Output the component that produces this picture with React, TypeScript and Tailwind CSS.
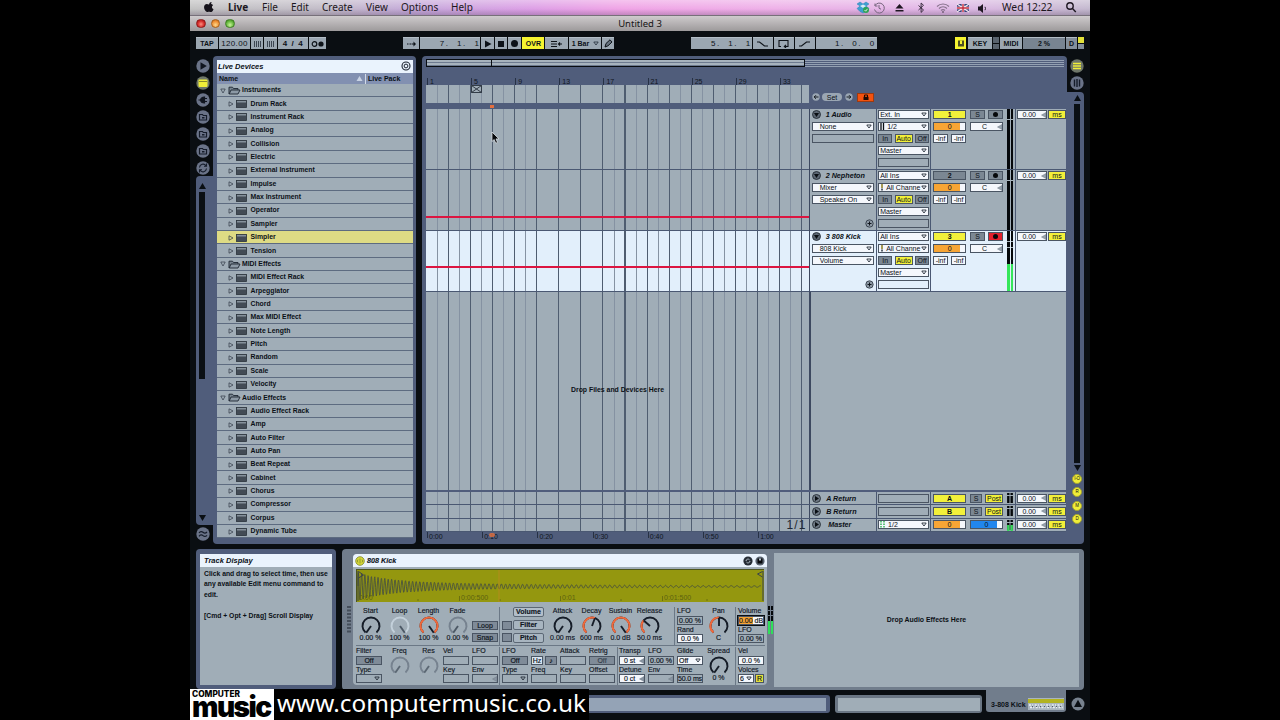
import React from 'react';
import { clsx } from 'clsx';

const GRID = "bg-[repeating-linear-gradient(90deg,transparent_0_21px,#4f5d70_21px_22.06px),repeating-linear-gradient(90deg,transparent_0_10.2px,#8592a2_10.2px_11.03px)] [background-position:1px_0]";

interface BrowserRow {
    label: string;
    folder?: boolean;
    active?: boolean;
}

const BROWSER_ROWS: BrowserRow[] = [
    { label: 'Instruments', folder: true },
    { label: 'Drum Rack' },
    { label: 'Instrument Rack' },
    { label: 'Analog' },
    { label: 'Collision' },
    { label: 'Electric' },
    { label: 'External Instrument' },
    { label: 'Impulse' },
    { label: 'Max Instrument' },
    { label: 'Operator' },
    { label: 'Sampler' },
    { label: 'Simpler', active: true },
    { label: 'Tension' },
    { label: 'MIDI Effects', folder: true },
    { label: 'MIDI Effect Rack' },
    { label: 'Arpeggiator' },
    { label: 'Chord' },
    { label: 'Max MIDI Effect' },
    { label: 'Note Length' },
    { label: 'Pitch' },
    { label: 'Random' },
    { label: 'Scale' },
    { label: 'Velocity' },
    { label: 'Audio Effects', folder: true },
    { label: 'Audio Effect Rack' },
    { label: 'Amp' },
    { label: 'Auto Filter' },
    { label: 'Auto Pan' },
    { label: 'Beat Repeat' },
    { label: 'Cabinet' },
    { label: 'Chorus' },
    { label: 'Compressor' },
    { label: 'Corpus' },
    { label: 'Dynamic Tube' },
];

const BARS = ['1', '5', '9', '13', '17', '21', '25', '29', '33'];
const TIMES = ['0:00', '0:10', '0:20', '0:30', '0:40', '0:50', '1:00'];

/* ---------- menu bar ---------- */

const MenuBar = () => (
    <div className="h-[15px] flex items-center shrink-0 pb-px font-['Noto_Sans',sans-serif] text-[10px] leading-none text-[#1c1720] bg-[linear-gradient(180deg,rgba(255,255,255,.35),rgba(255,255,255,0)_60%,rgba(60,40,70,.25)),linear-gradient(90deg,#c3c3c3,#c2bcc8_15%,#c5a9da_25%,#dd9fe6_38%,#f0a4e6_48%,#eeb0e8_65%,#dfb9e6_85%,#c4b9cf)]">
        <svg width="11" height="12" viewBox="0 0 24 24" className="ml-[14px] mr-[13px] shrink-0" fill="#15121a">
            <path d="M16.4 1c.1 1.700-.5 3.200-1.500 4.300-1 1.100-2.400 1.800-3.700 1.700-.2-1.500.5-3.100 1.400-4.100C13.600 1.800 15.200 1.100 16.400 1zM20.800 17c-.6 1.300-.9 1.900-1.600 3-1.100 1.600-2.500 3-4.200 3-1.600 0-2-.9-4.100-.9s-2.600.9-4.100.9c-1.800 0-3.100-1.500-4.200-3.100C-.4 15.400-.7 10.300 1.700 7.700 2.900 6.400 4.500 5.700 6.200 5.700c1.900 0 3 1 4.600 1 1.500 0 2.400-1 4.600-1 1.600 0 3.200.9 4.400 2.300-3.800 2.200-3.200 7.600 1 9z" />
        </svg>
        <span className="w-[34px] font-bold">Live</span>
        <span className="w-[29px]">File</span>
        <span className="w-[31px]">Edit</span>
        <span className="w-[44px]">Create</span>
        <span className="w-[35px]">View</span>
        <span className="w-[50px]">Options</span>
        <span className="w-[30px]">Help</span>
        <div className="flex-1" />
        <svg width="135" height="13" viewBox="0 0 135 13" className="shrink-0" fill="none" stroke="#2a2130">
            <path d="M1 3 4 1l3 2 3-2 3 2-3 2 3 2.500-3 3-3 1.500-3-1.500-3-3L4 5z" fill="#3d9fd0" stroke="#2b80b5" strokeWidth=".5" />
            <path d="M4 5l3-1.500L10 5 7 7z" fill="#d5ecf5" stroke="none" />
            <circle cx="10" cy="9" r="3" fill="#2fa355" stroke="none" />
            <path d="M8.500 9l1.200 1.200 1.800-2.400" stroke="#fff" strokeWidth=".8" />
            <path d="M19 4.500a5 5 0 1 1-.5 4M19 2.500v2.500h2.500M23 4v3.200l2 1" stroke="#75647c" strokeWidth="1" />
            <path d="M43.500 3l4 4.500h-8zM39.500 9h8v1.400h-8z" fill="#1d1620" stroke="none" />
            <path d="M62.500 4.500l5 4.500-2.400 2.400V2l2.400 2.300-5 4.700" strokeWidth=".9" />
            <g stroke="#87738c" strokeWidth="1.100">
                <path d="M81 5.500a8.500 8.500 0 0 1 12 0M83 7.500a5.600 5.600 0 0 1 8 0M85 9.500a2.800 2.800 0 0 1 4 0" />
            </g>
            <circle cx="87" cy="11" r=".9" fill="#6c5870" stroke="none" />
            <rect x="101" y="3" width="12" height="8" fill="#35407a" stroke="none" />
            <path d="M101 3l12 8M113 3l-12 8" stroke="#f4e5ee" strokeWidth="1.500" />
            <path d="M107 3v8M101 7h12" stroke="#fff" strokeWidth="2.600" />
            <path d="M107 3v8M101 7h12" stroke="#c22a3c" strokeWidth="1.400" />
            <path d="M122 5.500h2l3-2.500v9l-3-2.500h-2z" fill="#1d1620" stroke="none" />
            <path d="M129 5.800q1 1.700 0 3.400" />
        </svg>
        <span className="ml-[11px] w-[63px] whitespace-nowrap text-[10.300px]">Wed 12:22</span>
        <svg width="12" height="12" viewBox="0 0 12 12" className="mr-[13px] shrink-0" fill="none" stroke="#1d1620" strokeWidth="1.400">
            <circle cx="5" cy="5" r="3.200" />
            <path d="M7.500 7.500l3.300 3.500" />
        </svg>
    </div>
);

const TitleBar = () => (
    <div className="h-[16px] shrink-0 flex items-center bg-gradient-to-b from-[#cfcbcd] to-[#9d9a9b] border-t border-[#77707a] font-['Noto_Sans',sans-serif] text-[9.500px] leading-none text-[#151515]">
        <div className="flex gap-[5px] pl-[6px] w-[200px]">
            <span className="size-[9.500px] rounded-full border border-[#8d1a1a] bg-[radial-gradient(circle_at_50%_60%,#ff8d80,#d32b28_55%,#9c1616)]" />
            <span className="size-[9.500px] rounded-full border border-[#a8621c] bg-[radial-gradient(circle_at_50%_70%,#ffd98a,#ee8e33_60%,#bb6216)]" />
            <span className="size-[9.500px] rounded-full border border-[#3f7f25] bg-[radial-gradient(circle_at_50%_70%,#c9f59a,#62b53a_60%,#387d1c)]" />
        </div>
        <span className="flex-1 text-center">Untitled 3</span>
        <span className="w-[200px]" />
    </div>
);

/* ---------- transport ---------- */

const Ctl = ({ className, children }: { className?: string; children?: React.ReactNode }) => (
    <div className={clsx("h-[12px] shrink-0 flex items-center justify-center bg-[#9ba7b2] text-[#0d1218] text-[7px] font-bold leading-none whitespace-nowrap border-t border-[#b3bdc6]", className)}>
        {children}
    </div>
);

const Transport = () => (
    <div className="h-[25px] shrink-0 flex items-center px-[6px] pb-px">
        <div className="flex gap-px w-[208px]">
            <Ctl className="w-[22px]">TAP</Ctl>
            <Ctl className="w-[31px] text-[8px] font-normal tracking-[.3px]">120.00</Ctl>
            <Ctl className="w-[12px]"><svg width="9" height="8" stroke="#222c38"><path d="M1.500 1v6M3.500 1v6M5.500 1v6M7.500 1v6" strokeWidth=".8" /></svg></Ctl>
            <Ctl className="w-[13px]"><svg width="9" height="8" stroke="#222c38"><path d="M1.500 1v6M3.500 1v6M5.500 1v6M7.500 1v6" strokeWidth=".8" /></svg></Ctl>
            <Ctl className="w-[30px] text-[8px] tracking-[.6px] [word-spacing:1px]">4 / 4</Ctl>
            <Ctl className="w-[17px]"><svg width="13" height="8"><circle cx="3.500" cy="4" r="2.300" fill="none" stroke="#0d1218" strokeWidth="1.200" /><circle cx="10" cy="4" r="2.600" fill="#0d1218" /></svg></Ctl>
        </div>
        <div className="flex gap-px w-[288px]">
            <Ctl className="w-[16px]"><svg width="11" height="8" fill="#0d1218"><path d="M1 3.500h1.500v1H1zM3.500 3.500H5v1H3.500zM5.500 3.500h2v-2l2.500 2.500L7.500 6.500v-2h-2z" /></svg></Ctl>
            <Ctl className="w-[60px] text-[8px] tracking-[1.500px] [word-spacing:4px] justify-end font-normal">7. 1. 1</Ctl>
            <Ctl className="w-[13px]"><svg width="8" height="8"><path d="M1 .5l6.500 3.500L1 7.500z" fill="#0d1218" /></svg></Ctl>
            <Ctl className="w-[12px]"><span className="size-[6px] bg-[#0d1218]" /></Ctl>
            <Ctl className="w-[13px]"><span className="size-[7px] rounded-full bg-[#0d1218]" /></Ctl>
            <Ctl className="w-[22px] bg-[#f6f430] border-[#f6f430]">OVR</Ctl>
            <Ctl className="w-[23px]"><svg width="13" height="8" stroke="#0d1218" fill="none"><path d="M1 1.500h6M1 4h6M1 6.500h6M12 4H8.500M10 2.500L8.500 4 10 5.500" strokeWidth="1.100" /></svg></Ctl>
            <Ctl className="w-[32px] gap-[4px]">1 Bar<svg width="6" height="5"><path d="M.8 1h4.400L3 4z" fill="none" stroke="#222c38" strokeWidth=".8" /></svg></Ctl>
            <Ctl className="w-[12px]"><svg width="9" height="9"><path d="M1 8l1-3.500L6 .8 8 3 4 6.800z" fill="#67737f" stroke="#0d1218" strokeWidth="1" /></svg></Ctl>
        </div>
        <div className="flex gap-px w-[265px]">
            <Ctl className="w-[61px] text-[8px] tracking-[1.500px] [word-spacing:4px] justify-end font-normal">5. 1. 1</Ctl>
            <Ctl className="w-[20px]"><svg width="13" height="8" fill="none" stroke="#0d1218" strokeWidth="1.200"><path d="M1 2h2.500l5 4H12" /></svg></Ctl>
            <Ctl className="w-[20px]"><svg width="13" height="9" fill="none" stroke="#0d1218" strokeWidth="1.100"><path d="M4 7.500H2v-6h9v6H7.500M9 5.800L7.300 7.500 9 9" /></svg></Ctl>
            <Ctl className="w-[20px]"><svg width="13" height="8" fill="none" stroke="#0d1218" strokeWidth="1.200"><path d="M1 6h2.500l5-4H12" /></svg></Ctl>
            <Ctl className="w-[61px] text-[8px] tracking-[1.500px] [word-spacing:4px] justify-end pr-px font-normal">1. 0. 0</Ctl>
        </div>
        <div className="flex gap-px">
            <Ctl className="w-[11px] bg-[#f6f430] border-[#f6f430]"><svg width="8" height="8"><path d="M1 .5h6v6H1z" fill="#4d5022" /><path d="M3 .5h2V4H3z" fill="#f6f430" /></svg></Ctl>
            <Ctl className="w-[24px] ml-px">KEY</Ctl>
            <div className="flex flex-col gap-px w-[6px]"><span className="flex-1 bg-[#59636e]" /><span className="flex-1 bg-[#59636e]" /></div>
            <Ctl className="w-[22px]">MIDI</Ctl>
            <Ctl className="w-[42px] bg-[#788491]">2 %</Ctl>
            <Ctl className="w-[11px] bg-[#848f9b]">D</Ctl>
            <div className="flex flex-col gap-px w-[6px]"><span className="flex-1 bg-[#e4e23a]" /><span className="flex-1 bg-[#848f9b]" /></div>
        </div>
    </div>
);

/* ---------- browser ---------- */

const RoundIcon = ({ children, active }: { children: React.ReactNode; active?: boolean }) => (
    <svg width="14" height="14" viewBox="0 0 14 14" className="block shrink-0">
        <circle cx="7" cy="7" r="6.700" fill={active ? '#6e7669' : '#6a7388'} />
        {children}
    </svg>
);

const FolderGlyph = () => (
    <>
        <path d="M3.500 4.500h3l.8 1h3.200v4.500h-7z" fill="none" stroke="#151c2a" strokeWidth="1.200" />
        <path d="M6 7h2.500v1.500H6z" fill="#151c2a" />
    </>
);

const Browser = () => (
    <div className="flex h-full">
        <div className="w-[17px] ml-[6px] flex flex-col">
            <div className="flex flex-col gap-[3px] pt-[2.500px] h-[120px]">
                <RoundIcon><path d="M4.500 3.200l6.300 3.800-6.300 3.800z" fill="#10151f" /></RoundIcon>
                <RoundIcon active><rect x="2.500" y="3.500" width="9" height="7.500" rx="1" fill="#f0ee38" /><path d="M3 5.500h8" stroke="#8a8a2b" /></RoundIcon>
                <RoundIcon><path d="M2.500 7h2M4.500 7q.5-3 4-3v6q-3.500 0-4-3zM8.500 5.500h2.500M8.500 8.500h2.500" stroke="#10151f" strokeWidth="1.200" fill="#10151f" /></RoundIcon>
                <RoundIcon><FolderGlyph /></RoundIcon>
                <RoundIcon><FolderGlyph /></RoundIcon>
                <RoundIcon><FolderGlyph /></RoundIcon>
                <RoundIcon><path d="M3.500 6.500a3.600 3.600 0 0 1 6.500-1.800M10.500 7.500A3.600 3.600 0 0 1 4 9.300M10.500 2.500v2.700H8M3.500 11.500V8.800H6" stroke="#151c2a" strokeWidth="1.100" fill="none" /></RoundIcon>
            </div>
            <div className="h-[349px] bg-[#505d7b] rounded-l-[4px] flex flex-col items-start pl-[3px] pt-[7px] pb-[4px]">
                <svg width="7" height="7"><path d="M3.500 0L7 6H0z" fill="#0a0f14" /></svg>
                <span className="w-[6px] h-[187px] mt-[2px] bg-[#0a0f14]" />
                <div className="flex-1" />
                <svg width="7" height="7"><path d="M3.500 7L7 1H0z" fill="#0a0f14" /></svg>
            </div>
            <div className="pt-[2px]">
                <RoundIcon><path d="M3 6q2-2.500 4-.7T11 5M3 9.300q2-2.500 4-.7T11 8.300" stroke="#151c2a" strokeWidth="1.200" fill="none" /></RoundIcon>
            </div>
        </div>
        <div className="w-[203px] bg-[#505d7b] rounded-[4px] pl-[4px] pr-[3px] pt-[4px]">
            <div className="h-[12.500px] bg-[#eaf3fd] flex items-center justify-between pl-px pr-[2px] pt-px text-[7.500px] font-bold italic leading-none">
                Live Devices
                <svg width="10" height="10" fill="none" stroke="#1c2430" className="-mt-px"><circle cx="5" cy="5" r="4" strokeWidth="1.100" /><circle cx="5" cy="5" r="1.900" /></svg>
            </div>
            <div className="h-[11.500px] bg-[#8290b1] flex items-center text-[7px] font-bold leading-none pt-px">
                <span className="flex-1 pl-[2px]">Name</span>
                <svg width="7" height="7" className="mr-[2px]"><path d="M3.500 1L6.500 6h-6z" fill="#c9d3e4" /></svg>
                <span className="w-[48px] h-full pl-[2px] flex items-center border-l border-[#d2dae8]">Live Pack</span>
            </div>
            {BROWSER_ROWS.map(row => (
                <div
                    key={row.label}
                    className={clsx(
                        "h-[13.360px] flex items-center border-b border-[#5d6b80] pt-px text-[6.850px] font-bold leading-none",
                        row.active ? "bg-[#dedb84]" : "bg-[#a0adb7]"
                    )}
                >
                    {row.folder ? (
                        <>
                            <svg width="6" height="6" className="ml-[3px]"><path d="M.8 1h4.400L3 5z" fill="none" stroke="#303a46" strokeWidth=".7" /></svg>
                            <svg width="13" height="9" className="ml-[2px] mr-px"><path d="M1 8V1.200h3.500l1 1.300h4.500V4" fill="#78848f" stroke="#1d2631" strokeWidth=".9" /><path d="M1.200 8L3 4h9l-2 4z" fill="#8c99a5" stroke="#1d2631" strokeWidth=".9" /></svg>
                        </>
                    ) : (
                        <>
                            <svg width="6" height="6" className="ml-[11px]"><path d="M1 .8v4.400L5 3z" fill="none" stroke="#303a46" strokeWidth=".7" /></svg>
                            <svg width="11" height="8" className="ml-[2px] mr-[3.500px]"><rect x=".5" y=".5" width="10" height="7" fill="#424b55" stroke="#2a323b" strokeWidth=".8" /><path d="M1 1.800h9" stroke="#97a3ad" strokeWidth="1.200" /></svg>
                        </>
                    )}
                    <span>{row.label}</span>
                </div>
            ))}
        </div>
    </div>
);

/* ---------- arrangement ---------- */

const Drop = () => (
    <svg width="6" height="5" className="shrink-0"><path d="M.8 1h4.400L3 4z" fill="none" stroke="#27303b" strokeWidth=".9" /></svg>
);

const Box = ({ className, children }: { className?: string; children?: React.ReactNode }) => (
    <div className={clsx("h-[9px] shrink-0 border border-[#4a5563] flex items-center text-[7px] leading-none whitespace-nowrap overflow-hidden text-[#0c1117]", className)}>
        {children}
    </div>
);

const Select = ({ label, indent, icon }: { label: string; indent?: boolean; icon?: React.ReactNode }) => (
    <Box className="bg-[#f4f7fc] justify-between pr-px">
        <span className={clsx("flex items-center gap-[2px] min-w-0 flex-1", indent ? "pl-[7px]" : "pl-px")}>{icon}{label}</span>
        <Drop />
    </Box>
);

const Delay = () => (
    <div className="flex gap-px">
        <Box className="w-[30px] bg-[#f4f7fc] justify-end gap-[5px]">0.00<svg width="5" height="6"><path d="M5 .5v5L.5 3z" fill="#97a3ae" stroke="#6d7884" strokeWidth=".5" /></svg></Box>
        <Box className="w-[18px] bg-[#f2f03a] justify-center">ms</Box>
    </div>
);

interface Track {
    num: string;
    name: string;
    device: string;
    param: string;
    input: string;
    channel: string;
    on: boolean;
    armed?: boolean;
    selected?: boolean;
    line?: number;
}

const TRACKS: Track[] = [
    { num: '1', name: '1 Audio', device: 'None', param: '', input: 'Ext. In', channel: '1/2', on: true },
    { num: '2', name: '2 Nepheton', device: 'Mixer', param: 'Speaker On', input: 'All Ins', channel: 'All Channe', on: false, line: 46 },
    { num: '3', name: '3 808 Kick', device: '808 Kick', param: 'Volume', input: 'All Ins', channel: 'All Channe', on: true, armed: true, selected: true, line: 35 },
];

const Meter = ({ level }: { level?: boolean }) => (
    <div className="w-[6px] flex gap-px shrink-0 h-full">
        {[0, 1].map(i => (
            <div key={i} className="flex-1 flex flex-col bg-[#05080b]">
                <span className="h-px mt-[10px] bg-[#a9b5be]" />
                {level && <span className="h-px mt-[5px] bg-[#a9b5be]" />}
                <span className="flex-1" />
                {level && <span className="h-[27px] bg-[#35e65a]" />}
            </div>
        ))}
    </div>
);

const TrackRow = ({ track }: { track: Track }) => {
    const bg = track.selected ? "bg-[#e2effb]" : "bg-[#a0adb7]";
    return (
        <div className="flex h-[61px]">
            <div className={clsx("w-[383px] border-b border-[#4a5872] flex flex-col", bg, GRID)}>
                {track.line && <div className="h-[1.500px] bg-[#dc1540] shrink-0" style={{ marginTop: track.line }} />}
            </div>
            <div className="w-[1.500px] bg-[#3d4960]" />
            <div className={clsx("w-[66px] border-b border-[#4a5872] pl-[1.500px] pr-[2px] pt-px flex flex-col gap-[3px]", bg)}>
                <div className="flex items-center h-[9px] text-[7.200px] font-bold italic leading-none whitespace-nowrap">
                    <svg width="9" height="9" className="mr-[5px] shrink-0"><circle cx="4.500" cy="4.500" r="4" fill="#5b6672" stroke="#1b222b" strokeWidth=".8" /><path d="M2 3h5L4.500 7z" fill="#0a0f14" /></svg>
                    {track.name}
                </div>
                <Select label={track.device} indent />
                {track.param ? <Select label={track.param} indent /> : <Box />}
                {track.param && (
                    <svg width="9" height="9" className="self-end mt-[12px]"><circle cx="4.500" cy="4.500" r="3.700" fill="#8c98a4" stroke="#27303b" strokeWidth=".8" /><path d="M4.500 2.500v4M2.500 4.500h4" stroke="#10161d" /></svg>
                )}
            </div>
            <div className="w-px bg-[#4a5872]" />
            <div className={clsx("w-[53px] border-b border-[#4a5872] px-px pt-px flex flex-col gap-[3px]", bg)}>
                <Select label={track.input} />
                <Select
                    label={track.channel}
                    icon={track.num === '1'
                        ? <svg width="5" height="7"><path d="M1 0v7M3.500 0v7" stroke="#0a0f14" strokeWidth="1.300" /></svg>
                        : <svg width="4" height="7"><path d="M2 0v4" stroke="#8d7d1c" strokeWidth="1.500" /><path d="M2 4.500v2" stroke="#27303b" strokeWidth="1.500" /></svg>}
                />
                <div className="flex justify-between">
                    <Box className="w-[14px] bg-[#7b8793] justify-center">In</Box>
                    <Box className="w-[18px] bg-[#f2f03a] justify-center">Auto</Box>
                    <Box className="w-[14px] bg-[#7b8793] justify-center">Off</Box>
                </div>
                <Select label="Master" />
                <Box />
            </div>
            <div className="w-px bg-[#4a5872]" />
            <div className={clsx("w-[84px] border-b border-[#4a5872] pl-[2px] pr-[2px] flex justify-between", bg)}>
                <div className="flex flex-col gap-[3px] pt-px">
                    <div className="flex">
                        <Box className={clsx("w-[33px] justify-center font-bold", track.on ? "bg-[#f2f03a]" : "bg-[#7b8793]")}>{track.num}</Box>
                        <Box className="w-[15px] ml-[4px] bg-[#7b8793] justify-center">S</Box>
                        <Box className={clsx("w-[15px] ml-[3px] justify-center", track.armed ? "bg-[#e3202c]" : "bg-[#7b8793]")}>
                            <span className="size-[5px] rounded-full bg-[#07090c]" />
                        </Box>
                    </div>
                    <div className="flex">
                        <Box className="w-[33px] bg-[linear-gradient(90deg,#f7a535_85%,#f4f7fc_85%)] justify-center">0</Box>
                        <Box className="w-[33px] ml-[4px] bg-[#f4f7fc] justify-end">
                            C<svg width="5" height="6" className="ml-[10px]"><path d="M5 .5v5L.5 3z" fill="#97a3ae" stroke="#6d7884" strokeWidth=".5" /></svg>
                        </Box>
                    </div>
                    <div className="flex gap-[3px]">
                        <Box className="w-[15px] bg-[#f4f7fc] justify-center">-inf</Box>
                        <Box className="w-[15px] bg-[#f4f7fc] justify-center">-inf</Box>
                    </div>
                </div>
                <Meter level={track.armed} />
            </div>
            <div className="w-px bg-[#4a5872]" />
            <div className={clsx("flex-1 border-b border-[#4a5872] pl-px pt-px", bg)}>
                <Delay />
            </div>
        </div>
    );
};

const ReturnRow = ({ name, letter }: { name: string; letter?: string }) => (
    <div className="flex h-[13.330px] bg-[#a0adb7] border-b border-[#4a5872]">
        <div className={clsx("w-[383px] flex items-center justify-end pr-[2px] font-['Liberation_Sans',sans-serif] text-[12px] leading-none tracking-[1.200px] text-[#1f2935]", GRID)}>
            {!letter && '1/1'}
        </div>
        <div className="w-[1.500px] bg-[#3d4960]" />
        <div className="w-[66px] pl-[2px] flex items-center text-[7.200px] font-bold italic leading-none">
            <svg width="9" height="9" className="mr-[5px]"><circle cx="4.500" cy="4.500" r="4" fill="#6d7884" stroke="#1b222b" strokeWidth=".8" /><path d="M3 2l4 2.500L3 7z" fill="#0a0f14" /></svg>
            <span className={clsx(!letter && "pl-[2px]")}>{name}</span>
        </div>
        <div className="w-px bg-[#4a5872]" />
        <div className="w-[53px] px-px pt-[1.500px]">
            {letter ? <Box /> : <Select label="1/2" icon={<svg width="6" height="7"><path d="M1 0v7M4 0v7" stroke="#35b455" strokeWidth="1.500" strokeDasharray="1.500 1" /></svg>} />}
        </div>
        <div className="w-px bg-[#4a5872]" />
        <div className="w-[84px] pl-[2px] pr-[2px] flex justify-between">
            {letter ? (
                <div className="flex pt-[1.500px]">
                    <Box className="w-[33px] bg-[#f2f03a] justify-center font-bold">{letter}</Box>
                    <Box className="w-[12px] ml-[4px] bg-[#7b8793] justify-center">S</Box>
                    <Box className="w-[18px] ml-[3px] bg-[#f2f03a] justify-center">Post</Box>
                </div>
            ) : (
                <div className="flex pt-[1.500px]">
                    <Box className="w-[33px] bg-[linear-gradient(90deg,#f7a535_85%,#f4f7fc_85%)] justify-center">0</Box>
                    <Box className="w-[33px] ml-[4px] bg-[linear-gradient(90deg,#2186ee_85%,#f4f7fc_85%)] justify-center">0</Box>
                </div>
            )}
            <svg width="6" height="12" className="mt-px">
                <path d="M1.300 0v10M4.700 0v10" stroke="#05080b" strokeWidth="2.400" />
                <path d="M0 2.500h6" stroke="#a0adb7" />
                {!letter && <path d="M1.300 5v6M4.700 5v6" stroke="#35d65a" strokeWidth="2.400" />}
            </svg>
        </div>
        <div className="w-px bg-[#4a5872]" />
        <div className="flex-1 pl-px pt-[1.500px]"><Delay /></div>
    </div>
);

const Arrangement = () => (
    <div className="flex h-full relative">
        <div className="w-[645px] bg-[#505d7b] rounded-l-[4px] rounded-tr-[4px] pl-[4px]">
            <div className="h-[11px] pt-[3px] flex">
                <div className="w-[379px] h-[8px] border border-[#090d12] bg-[repeating-linear-gradient(180deg,#a7b3bd_0_2px,#6d7a8f_2px_3px)] flex">
                    <span className="w-px ml-[64px] bg-[#090d12]" />
                </div>
                <div className="w-[259px] h-[7px] mt-px bg-[repeating-linear-gradient(180deg,#94a1b3_0_1px,#505d7b_1px_2px)]" />
            </div>
            <div className="h-[18px] flex items-end pl-px text-[7px] leading-none text-[#0f1520]">
                {BARS.map(b => (
                    <span key={b} className="w-[44.120px] h-[7px] border-l border-[#263145] pl-[2px] shrink-0">{b}</span>
                ))}
            </div>
            <div className="flex h-[18px]">
                <div className={clsx("w-[383px] bg-[#a0adb7] pl-[45px]", GRID)}>
                    <svg width="11" height="8" className="block" fill="none" stroke="#27303b" strokeWidth=".9"><path d="M.5.5h10v7H.5zM.5.500l10 7M10.500.500l-10 7" /></svg>
                </div>
                <div className="flex items-center pl-[3px] pt-[6px] text-[7px] leading-none">
                    <svg width="8" height="8" className="shrink-0"><circle cx="4" cy="4" r="3.700" fill="#9aa6b3" /><path d="M6.500 4H2M4 2.200L2.200 4 4 5.800" stroke="#0a0f14" fill="none" strokeWidth=".9" /></svg>
                    <span className="w-[20px] h-[8px] ml-[2px] shrink-0 rounded-full bg-[#9aa6b3] flex items-center justify-center">Set</span>
                    <svg width="8" height="8" className="ml-[3px] shrink-0"><circle cx="4" cy="4" r="3.700" fill="#9aa6b3" /><path d="M1.500 4H6M4 2.200L5.800 4 4 5.800" stroke="#0a0f14" fill="none" strokeWidth=".9" /></svg>
                    <span className="w-[17px] h-[9px] ml-[4px] shrink-0 bg-[#f4520f] border border-[#9c3a12] flex items-center justify-center">
                        <svg width="6" height="6"><path d="M.5 2.800h5V6h-5z" fill="#1d0a03" /><path d="M1.500 3V1h3v2" fill="none" stroke="#1d0a03" /></svg>
                    </span>
                </div>
            </div>
            <div className="h-[5px] pl-[64px]"><span className="block w-[4px] h-[3px] mt-px translate-y-px bg-[#e5703f]" /></div>
            <div className="w-[640px]">
                {TRACKS.map(t => <TrackRow key={t.num} track={t} />)}
                <div className="flex h-[198px]">
                    <div className={clsx("w-[383px] bg-[#a0adb7] flex items-center justify-center pb-px text-[6.900px] font-bold leading-none", GRID)}>Drop Files and Devices Here</div>
                    <div className="w-[1.500px] bg-[#3d4960]" />
                    <div className="flex-1 bg-[#a0adb7]" />
                </div>
                <div className="h-[2px]" />
                <ReturnRow name="A Return" letter="A" />
                <ReturnRow name="B Return" letter="B" />
                <ReturnRow name="Master" />
            </div>
            <div className="flex pl-px h-[10px] text-[7px] leading-none text-[#0f1520]">
                {TIMES.map(t => (
                    <span key={t} className="w-[55.200px] h-[6px] border-l border-[#263145] pl-px pt-px shrink-0">{t}</span>
                ))}
            </div>
        </div>
        <div className="w-[17px] flex flex-col">
            <div className="h-[36px] pl-[3px] pt-[2.500px] flex flex-col gap-[3px]">
                <RoundIcon active><path d="M3 4.500h8M3 7h8M3 9.500h8" stroke="#f0ee38" strokeWidth="1.700" /></RoundIcon>
                <RoundIcon><path d="M4.500 3.500v7M7 3v8M9.500 3.500v7" stroke="#151c2a" strokeWidth="1.400" /></RoundIcon>
            </div>
            <div className="flex-1 bg-[#505d7b] rounded-r-[4px] flex flex-col items-center pl-[3px] pt-[3px]">
                <svg width="7" height="7"><path d="M3.500 0L7 6H0z" fill="#0a0f14" /></svg>
                <span className="w-[6px] h-[359px] mt-[2px] bg-[#0a0f14]" />
                <svg width="7" height="7" className="mt-px"><path d="M3.500 7L7 1H0z" fill="#0a0f14" /></svg>
                <div className="flex flex-col gap-[3.400px] mt-[3px]">
                    {['I-O', 'R', 'M', 'D'].map(s => (
                        <span key={s} className="size-[10px] rounded-full bg-[#f0ee38] border border-[#a3a335] flex items-center justify-center text-[4.500px] leading-none tracking-tighter">{s}</span>
                    ))}
                </div>
            </div>
        </div>
        <span className="absolute left-[67px] top-[477px] w-[6px] h-[4px] bg-[#e5703f]/80 rounded-full" />
        <svg width="9" height="13" viewBox="0 0 9 13" className="absolute left-[69px] top-[75px]"><path d="M1 1v9.500l2.200-2 1.500 3.700 1.800-.8L5 7.900h3z" fill="#05070a" stroke="#e8eef4" strokeWidth=".7" /></svg>
    </div>
);

/* ---------- simpler device ---------- */

const polar = (deg: number, r: number) => {
    const a = (deg * Math.PI) / 180;
    return `${(10 + r * Math.sin(a)).toFixed(2)} ${(10 - r * Math.cos(a)).toFixed(2)}`;
};

const arc = (from: number, to: number) =>
    `M${polar(from, 8.500)}A8.500 8.500 0 ${to - from > 180 ? 1 : 0} 1 ${polar(to, 8.500)}`;

interface KnobProps {
    value?: number;
    fill?: string;
    track?: string;
    hand?: string;
    from?: number;
}

const Knob = ({ value = 0, fill, track = '#161d28', hand = '#161d28', from = -140 }: KnobProps) => {
    const angle = -145 + value * 290;
    return (
        <svg width="20" height="19" viewBox="0 0 20 19" className="block mx-auto shrink-0">
            <path d={arc(-140, 140)} fill="none" stroke={track} strokeWidth="1.900" />
            {fill && <path d={arc(from, Math.min(angle, 140))} fill="none" stroke={fill} strokeWidth="2.100" />}
            <path d={`M10 10L${polar(angle, 8.300)}`} stroke={hand} strokeWidth="1.900" />
        </svg>
    );
};

const KnobCol = ({ label, text, ...knob }: KnobProps & { label: string; text?: string }) => (
    <div className="w-[29px] shrink-0 text-center whitespace-nowrap flex flex-col items-center">
        <div className="h-[9px] w-[40px] -mx-2">{label}</div>
        <Knob {...knob} />
        <div className="w-[40px] -mx-2 -mt-px">{text}</div>
    </div>
);

const Val = ({ kind, children, className }: { kind?: string; children?: React.ReactNode; className?: string }) => (
    <Box
        className={clsx(
            "w-[26px] h-[9.500px] justify-center",
            kind === 'white' && "bg-[#f4f7fc]",
            kind === 'dark' && "bg-[#7f8b98]",
            kind === 'hot' && "bg-[linear-gradient(90deg,#f7a535_60%,#f4f7fc_60%)] outline outline-[#0a0f14]",
            kind === 'on' && "bg-[#d8e4ef]",
            kind === 'yellow' && "bg-[#e2e03c]",
            className
        )}
    >
        {children}
    </Box>
);

const Pair = ({ a, b, top, bottom, className }: { a: string; b: string; top: React.ReactNode; bottom: React.ReactNode; className?: string }) => (
    <div className={clsx("w-[29px] shrink-0 whitespace-nowrap", className)}>
        <div className="h-[9px]">{a}</div>
        {top}
        <div className="h-[9px] pt-px">{b}</div>
        {bottom}
    </div>
);

const wavePath = () => {
    let d = 'M1 16';
    let phase = 0;
    for (let x = 1; x < 404; x += 0.4) {
        const amp = 9 * Math.exp(-x / 30) + 5 * Math.exp(-x / 170) + 0.3;
        phase += (0.4 * 2 * Math.PI) / (3.2 + x / 150);
        d += `L${x.toFixed(1)} ${(16.5 - amp * Math.sin(phase)).toFixed(2)}`;
    }
    return d;
};

const Nudge = () => (
    <svg width="5" height="6" className="ml-auto shrink-0"><path d="M5 .5v5L.5 3z" fill="#8995a2" stroke="#6d7884" strokeWidth=".5" /></svg>
);

const Simpler = () => (
    <div className="w-[414px] h-[131px] rounded-[4px] overflow-hidden bg-[#a0adb7] text-[7px] leading-none text-[#10161f] [-webkit-text-stroke:.15px_#10161f]">
        <div className="h-[13px] bg-[#eaf3fd] flex items-center pl-[2px] pr-[2px] text-[7.200px] font-bold italic">
            <svg width="10" height="10" className="mr-[2px]"><circle cx="5" cy="5" r="4.300" fill="#d7da38" stroke="#7c8428" strokeWidth=".8" /><path d="M5 2.500v5M3 3.500q-1.200 1.500 0 3M7 3.500q1.200 1.500 0 3" stroke="#7c8428" fill="none" strokeWidth=".8" /></svg>
            <span className="flex-1">808 Kick</span>
            <svg width="10" height="10" className="mr-[2px]"><circle cx="5" cy="5" r="4.600" fill="#252c35" /><path d="M3 5a2 2 0 0 1 3.500-1.200M7 5a2 2 0 0 1-3.500 1.200" stroke="#b5c0ca" fill="none" /></svg>
            <svg width="10" height="10"><circle cx="5" cy="5" r="4.600" fill="#59636f" /><path d="M2.500 2.500h5v5h-5z" fill="#07090c" /><path d="M4 2.500h2v2H4z" fill="#b5c0ca" /></svg>
        </div>
        <div className="mt-[2px] ml-[3px] w-[408px] h-[33px] bg-[#94970f] border-l border-t border-[#4d551c]">
            <svg width="407" height="32" fill="none" className="block">
                <path d={wavePath()} stroke="#4b5440" strokeWidth=".9" />
                <path d="M1 1v30M1.500 1.500l5 3.500-5 3" stroke="#39424c" />
                <path d="M406 1v30M405.500 1.500l-5 2.500 5 3" stroke="#39424c" />
                <path d="M102.500 26v5M203.500 26v5M305.500 26v5M61 29v2M143 29v2M264 29v2M350 29v2" stroke="#6b700f" />
                <path d="M142 0v32" stroke="#b58a1c" />
                <g fill="#5d620f" fontSize="7" stroke="none">
                    <text x="2" y="30">0:00</text>
                    <text x="104" y="30">0:00:500</text>
                    <text x="205" y="30">0:01</text>
                    <text x="307" y="30">0:01:500</text>
                </g>
            </svg>
        </div>
        <div className="ml-[3px] h-[44px] w-[409px] flex pt-[5px] border-b border-[#6b7886]">
            <KnobCol label="Start" text="0.00 %" />
            <KnobCol label="Loop" text="100 %" value={1} track="#c3d0da" hand="#4c5865" />
            <KnobCol label="Length" text="100 %" value={1} fill="#f0693c" />
            <KnobCol label="Fade" text="0.00 %" track="#76828f" hand="#4c5865" />
            <div className="w-[27px] shrink-0 pt-[14px] flex flex-col gap-[3px]">
                <Val kind="dark">Loop</Val>
                <Val kind="dark">Snap</Val>
            </div>
            <div className="w-px shrink-0 bg-[#6b7886]" />
            <div className="flex flex-col shrink-0 gap-[3px] pt-[14px] pl-[2px] w-[13px]">
                <Val kind="dark" className="w-[9.500px]!" />
                <Val kind="dark" className="w-[9.500px]!" />
            </div>
            <div className="flex flex-col shrink-0 gap-[3px] w-[31px] text-center font-bold">
                <span className="h-[10px] rounded-[2px] border border-[#5c6875] bg-[#b2bec9] leading-[8px]">Volume</span>
                <span className="h-[10px] rounded-[2px] border border-[#5c6875] bg-[#a8b5c0] leading-[8px]">Filter</span>
                <span className="h-[10px] rounded-[2px] border border-[#5c6875] bg-[#a8b5c0] leading-[8px]">Pitch</span>
            </div>
            <div className="w-[4px] shrink-0" />
            <KnobCol label="Attack" text="0.00 ms" />
            <KnobCol label="Decay" text="600 ms" value={0.57} fill="#f0693c" />
            <KnobCol label="Sustain" text="0.0 dB" value={1} fill="#f0693c" />
            <KnobCol label="Release" text="50.0 ms" value={0.33} fill="#f0693c" />
            <div className="w-[13px] shrink-0 flex justify-end pr-[2px]"><span className="w-px bg-[#6b7886]" /></div>
            <Pair a="LFO" b="Rand" className="w-[27px]!" top={<Val>0.00 %</Val>} bottom={<Val kind="white">0.0 %</Val>} />
            <KnobCol label="Pan" text="C" value={0.5} fill="#f0693c" />
            <div className="w-[5px] shrink-0 pl-[2px]"><span className="block w-px h-full bg-[#6b7886]" /></div>
            <Pair a="Volume" b="LFO" className="w-[26px]!" top={<Val kind="hot">0.00 dB</Val>} bottom={<Val>0.00 %</Val>} />
        </div>
        <div className="ml-[3px] w-[409px] h-[39px] flex pt-px">
            <Pair a="Filter" b="Type" top={<Val kind="dark">Off</Val>} bottom={<Val className="justify-end! pr-px"><Drop /></Val>} />
            <KnobCol label="Freq" track="#76828f" hand="#5b6773" />
            <KnobCol label="Res" track="#76828f" hand="#5b6773" />
            <Pair a="Vel" b="Key" top={<Val />} bottom={<Val />} />
            <Pair a="LFO" b="Env" className="w-[27px]!" top={<Val />} bottom={<Val><Nudge /></Val>} />
            <div className="w-[3px] shrink-0"><span className="block w-px h-full bg-[#6b7886]" /></div>
            <Pair a="LFO" b="Type" top={<Val kind="dark">Off</Val>} bottom={<Val className="justify-end! pr-px"><Drop /></Val>} />
            <Pair
                a="Rate"
                b="Freq"
                top={<div className="flex gap-[2px]"><Val kind="on" className="w-[12px]!">Hz</Val><Val kind="dark" className="w-[12px]!">♪</Val></div>}
                bottom={<Val />}
            />
            <Pair a="Attack" b="Key" top={<Val />} bottom={<Val />} />
            <Pair a="Retrig" b="Offset" className="w-[27px]!" top={<Val kind="dark" className="text-[#4a5563]!">Off</Val>} bottom={<Val />} />
            <div className="w-[3px] shrink-0 pl-px"><span className="block w-px h-full bg-[#6b7886]" /></div>
            <Pair a="Transp" b="Detune" top={<Val kind="white" className="pl-[4px]">0 st<Nudge /></Val>} bottom={<Val kind="white" className="pl-[4px]">0 ct<Nudge /></Val>} />
            <Pair a="LFO" b="Env" top={<Val>0.00 %</Val>} bottom={<Val><Nudge /></Val>} />
            <Pair a="Glide" b="Time" className="w-[27px]!" top={<Val kind="white" className="justify-between! px-px">Off<Drop /></Val>} bottom={<Val className="tracking-[-.15px]">50.0 ms</Val>} />
            <KnobCol label="Spread" text="0 %" />
            <div className="w-[5px] shrink-0 pl-[2px]"><span className="block w-px h-full bg-[#6b7886]" /></div>
            <Pair
                a="Vel"
                b="Voices"
                className="w-[26px]!"
                top={<Val kind="white">0.0 %</Val>}
                bottom={<div className="flex gap-px"><Val kind="white" className="w-[16px]! justify-between! px-px">6<Drop /></Val><Val kind="yellow" className="w-[9px]!">R</Val></div>}
            />
        </div>
    </div>
);

const DeviceView = () => (
    <div className="w-[742px] h-[141px] rounded-[4px] bg-[#717d8c] flex pt-[4px]">
        <div className="w-[11px] pt-[52px] pl-[5px]">
            <svg width="4" height="30" stroke="#1a212b" strokeWidth="1" strokeDasharray="2 1.500"><path d="M1 1v28M3 1v28" /></svg>
        </div>
        <div className="pt-px"><Simpler /></div>
        <div className="w-[7px] pt-[53px] flex gap-px pl-px">
            {[0, 1].map(i => (
                <div key={i} className="w-[2px] flex flex-col">
                    <span className="h-[4px] bg-[#05080b] mb-px" />
                    <span className="h-[4px] bg-[#05080b] mb-px" />
                    <span className="h-[5px] bg-[#05080b]" />
                    <span className="h-[13px] bg-[#2fe05a]" />
                </div>
            ))}
        </div>
        <div className="w-[305px] h-[134px] bg-[#a0adb7] flex items-center justify-center text-[6.900px] font-bold leading-none">Drop Audio Effects Here</div>
    </div>
);

const InfoView = () => (
    <div className="w-[140px] h-[140px] rounded-[4px] bg-[#505d7b] px-[4px] pt-[5px]">
        <div className="h-[12.500px] bg-[#eaf3fd] flex items-center pl-[4px] pt-px text-[7.500px] font-bold italic leading-none">Track Display</div>
        <div className="h-[118.500px] bg-[#a0adb7] pl-[4px] pt-[2px] text-[6.800px] font-bold leading-[10.700px] whitespace-nowrap">
            <p>Click and drag to select time, then use</p>
            <p>any available Edit menu command to</p>
            <p>edit.</p>
            <p className="mt-[10.700px]">[Cmd + Opt + Drag] Scroll Display</p>
        </div>
    </div>
);

const StatusBar = () => (
    <div className="h-[30px] flex items-start">
        <div className="w-[640px] h-[18px] mt-[5px] bg-[#505d7b] rounded-[3px] p-[2.500px]"><div className="h-full w-[633px] bg-[#94a3b6]" /></div>
        <div className="w-[147px] h-[18px] mt-[5px] ml-[5px] bg-[#6a7684] rounded-[3px] p-[2.500px]"><div className="h-full bg-[#a0adb7]" /></div>
        <div className="w-[80px] h-[22px] ml-[4px] bg-[#717d8c] rounded-b-[3px] flex items-center pl-[5px] pt-[6px] text-[7px] font-bold leading-none whitespace-nowrap">
            3-808 Kick
            <svg width="36" height="12" className="ml-[2px]">
                <path d="M0 0h36v12H0z" fill="#a9b5bf" />
                <path d="M0 1h36v4H0z" fill="#b2b321" />
                <path d="M1 7h34M2 9.500h33" stroke="#e8eef4" strokeWidth="1.500" strokeDasharray="2 1.200 1 1.500" />
                <path d="M4 8.500h30" stroke="#4f5b67" strokeDasharray="1 3" />
            </svg>
        </div>
        <svg width="14" height="14" className="ml-[5px] mt-[7px]"><circle cx="7" cy="7" r="6.500" fill="#77828f" /><path d="M7 2.800L11 10H3z" fill="#0a0f14" /></svg>
    </div>
);

const Watermark = () => (
    <div className="absolute left-0 top-[689px] h-[31px] w-[399px] bg-black flex">
        <div className="w-[84px] bg-white text-black pl-[2px]">
            <div className="font-['Inter',sans-serif] font-extrabold text-[8.300px] leading-[9px] pt-px">COMPUTER</div>
            <div className="font-['Inter',sans-serif] font-black text-[28px] leading-[17px] tracking-[-1.500px]">music</div>
        </div>
        <div className="pl-[3px] text-white font-['Noto_Sans',sans-serif] text-[24.300px] leading-[28px] whitespace-nowrap">www.computermusic.co.uk</div>
    </div>
);

const App: React.FC = () => (
    <div className="w-[1280px] h-[720px] bg-black flex justify-center overflow-hidden">
        <div className="relative w-[900px] h-[720px] bg-[#0a0e12] flex flex-col font-['Liberation_Sans',Arial,sans-serif] text-[#0b1016]">
            <MenuBar />
            <TitleBar />
            <Transport />
            <div className="h-[488px] shrink-0 flex gap-[6px]">
                <Browser />
                <Arrangement />
            </div>
            <div className="h-[146px] shrink-0 flex gap-[6px] pl-[6px] pt-[5px]">
                <InfoView />
                <DeviceView />
            </div>
            <StatusBar />
            <Watermark />
        </div>
    </div>
);

export default App;
